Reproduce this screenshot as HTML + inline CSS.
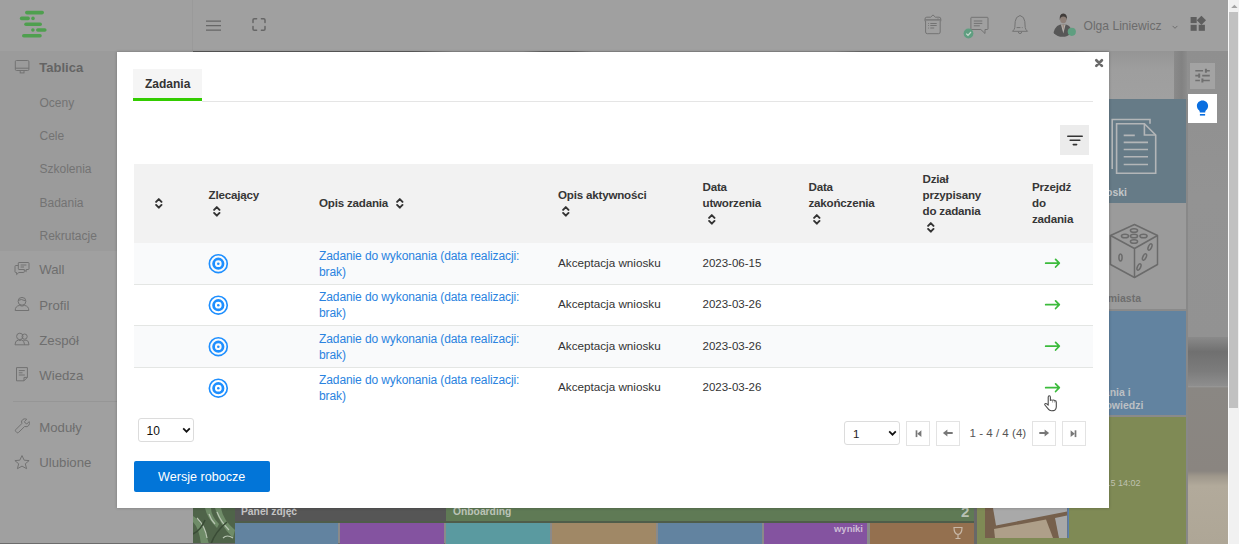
<!DOCTYPE html>
<html><head><meta charset="utf-8">
<style>
*{box-sizing:border-box;margin:0;padding:0}
html,body{width:1239px;height:544px;overflow:hidden;background:#a0a0a0;font-family:"Liberation Sans",sans-serif}
.abs{position:absolute}
#header{left:0;top:0;width:1228px;height:51px;background:#a0a0a0}
#sidebar{left:0;top:51px;width:193px;height:493px;background:#a0a0a0}
#scroll{left:1228px;top:0;width:11px;height:544px;background:#f1f1f1}
.side-item{position:absolute;left:39.5px;color:#737373;font-size:12px;line-height:16px;white-space:nowrap}
.side-main{position:absolute;left:39.3px;color:#6e6e6e;font-size:13.2px;line-height:16px;white-space:nowrap}
#modal{left:117px;top:52px;width:992px;height:456px;background:#fff;box-shadow:0 0 3px rgba(0,0,0,.25)}
.th{position:absolute;font-weight:bold;font-size:11.6px;letter-spacing:-0.2px;color:#363636;line-height:16px;white-space:nowrap}
.row{position:absolute;left:17px;width:959px;height:42px;border-bottom:1px solid #e3e3e3}
.odd{background:#f9fafb}
.cell{position:absolute;font-size:11.7px;color:#333;white-space:nowrap;line-height:16px}
.link{font-size:12px;letter-spacing:-0.1px}
.link{color:#2a83e0}
.pb{top:421px;width:24px;height:25px;border:1px solid #e3e3e3;background:#fff}
</style></head><body>

<!-- HEADER -->
<div id="header" class="abs">
  <svg class="abs" style="left:0;top:0" width="60" height="50">
    <g stroke="#4f9f4f" stroke-width="3.6" stroke-linecap="round">
      <line x1="26.8" y1="12.6" x2="42.2" y2="12.6"/>
      <line x1="21.6" y1="18.4" x2="28.1" y2="18.4"/>
      <line x1="26" y1="24.2" x2="40.2" y2="24.2"/>
      <line x1="37.8" y1="30" x2="44.8" y2="30"/>
      <line x1="23.8" y1="35.8" x2="40" y2="35.8"/>
    </g>
    <circle cx="33" cy="18.4" r="1.8" fill="#4f9f4f"/>
    <circle cx="32.9" cy="30" r="1.8" fill="#4f9f4f"/>
  </svg>
  <div class="abs" style="left:192px;top:0;width:1px;height:51px;background:#9a9a9a"></div>

  <!-- hamburger -->
  <svg class="abs" style="left:204px;top:17px" width="20" height="16"><path d="M2 4.2 H17 M2 8.7 H17 M2 13.2 H17" stroke="#666" stroke-width="1.3"/></svg>
  <!-- fullscreen -->
  <svg class="abs" style="left:250px;top:16px" width="18" height="17"><path d="M3 6.5 V4 Q3 2.7 4.3 2.7 H6.6 M11.4 2.7 H13.7 Q15 2.7 15 4 V6.5 M15 10.5 V13 Q15 14.3 13.7 14.3 H11.4 M6.6 14.3 H4.3 Q3 14.3 3 13 V10.5" fill="none" stroke="#666" stroke-width="1.5" stroke-linecap="round"/></svg>
  <!-- clipboard -->
  <svg class="abs" style="left:922px;top:13px" width="21" height="23"><g fill="none" stroke="#737373" stroke-width="1"><path d="M3.6 8 V19 Q3.6 20.7 5.3 20.7 H16.5 Q18.2 20.7 18.2 19 V8"/><path d="M3 8.2 V6 Q3 4.2 4.8 4.2 H8.6 L11 1.9 L13.4 4.2 H17 Q18.8 4.2 18.8 6 V8.2"/><path d="M3.2 6.9 H18.6" stroke-width="1.3"/><path d="M8.3 10.5 H14.7 M8.3 12.5 H14.7 M8.3 15 H12.2"/></g><g fill="#737373"><circle cx="6.6" cy="10.5" r=".55"/><circle cx="6.6" cy="12.5" r=".55"/><circle cx="6.6" cy="15" r=".55"/><circle cx="16" cy="5.7" r=".55"/></g></svg>
  <!-- chat -->
  <svg class="abs" style="left:962px;top:13px" width="30" height="28"><g fill="none" stroke="#737373" stroke-width="1"><path d="M9.6 4.3 H25.3 Q26 4.3 26 5 V15.8 Q26 16.5 25.3 16.5 H23 V20.5 L18.8 16.5 H9.6 Q8.9 16.5 8.9 15.8 V5 Q8.9 4.3 9.6 4.3 Z"/><path d="M11.8 8 H20.3 M11.8 10.4 H20.3 M11.8 12.8 H17.8"/></g><circle cx="6.5" cy="20.5" r="4.9" fill="#5f9e80"/><path d="M4.2 20.6 L6 22.3 L9 19" fill="none" stroke="#c9d9d0" stroke-width="1.2"/></svg>
  <!-- bell -->
  <svg class="abs" style="left:1010px;top:13px" width="20" height="23"><g fill="none" stroke="#737373" stroke-width="1"><path d="M10 2.5 Q5.6 3.6 5.2 8.5 L4.8 14.5 Q4.5 16.6 2.5 18.3 H17.5 Q15.5 16.6 15.2 14.5 L14.8 8.5 Q14.4 3.6 10 2.5 Z"/><path d="M8.3 18.6 Q8.3 20.6 10 20.6 Q11.7 20.6 11.7 18.6"/><path d="M6.6 14.6 H10.4 M11.8 14.6 H12.6"/></g></svg>
  <!-- avatar -->
  <svg class="abs" style="left:1050px;top:11px" width="30" height="30">
    <defs><clipPath id="avc"><circle cx="12.5" cy="13.5" r="12.3"/></clipPath></defs>
    <g clip-path="url(#avc)">
    <path d="M2.5 28 Q3.5 15.5 9.8 13.8 L13.3 13.2 L16.8 13.8 Q22.5 15.5 23 28 Z" fill="#575757"/>
    <path d="M11 13.6 L13.3 22.5 L15.6 13.6 Z" fill="#b4b0ac"/>
    <path d="M12.2 13.4 L13.3 19 L14.4 13.4 Z" fill="#9a8c82"/>
    <ellipse cx="13.3" cy="8.2" rx="3.2" ry="4.1" fill="#8d7f77"/>
    <path d="M9.7 9.2 Q9.2 2.4 13.3 2.5 Q17.4 2.4 17.1 9.4 Q16.6 5.6 13.3 5.4 Q10.2 5.6 9.7 9.2 Z" fill="#403c3a"/>
    </g>
    <circle cx="21.8" cy="20.8" r="4.1" fill="#5f9e80"/>
  </svg>
  <div class="abs" style="left:1083.5px;top:18px;font-size:12.1px;color:#6c6c6c;line-height:16px;white-space:nowrap">Olga Liniewicz</div>
  <svg class="abs" style="left:1170px;top:23px" width="10" height="8"><path d="M2.6 2.9 L5 5.3 L7.4 2.9" fill="none" stroke="#6e6e6e" stroke-width="1"/></svg>
  <!-- grid icon -->
  <svg class="abs" style="left:1188px;top:14px" width="20" height="19"><g fill="#5e5e5e"><rect x="2.6" y="3" width="6.1" height="6.1"/><rect x="2.6" y="10.8" width="6.1" height="6"/><rect x="10.7" y="10.8" width="6.2" height="6"/><path d="M13.4 1.7 L18 6.3 L13.4 10.9 L8.8 6.3 Z"/></g></svg>
</div>

<!-- SIDEBAR -->
<div id="sidebar" class="abs">
  <div class="abs" style="left:0;top:0;width:193px;height:200px;background:#9b9b9b"></div>
  <svg class="abs" style="left:12px;top:7px" width="20" height="17"><g fill="none" stroke="#727272" stroke-width="1"><rect x="3.3" y="2.5" width="13.6" height="10" rx="1.2"/><path d="M3.3 10.2 H16.9"/><rect x="8.2" y="12.5" width="3.8" height="2.4"/></g></svg>
  <div class="abs" style="left:39.3px;top:9px;font-weight:bold;font-size:13px;color:#646464;line-height:16px">Tablica</div>
  <div class="side-item" style="top:43.5px">Oceny</div>
  <div class="side-item" style="top:76.5px">Cele</div>
  <div class="side-item" style="top:110px">Szkolenia</div>
  <div class="side-item" style="top:143.5px">Badania</div>
  <div class="side-item" style="top:176.5px">Rekrutacje</div>
  <!-- wall icon -->
  <svg class="abs" style="left:12px;top:209px" width="20" height="17"><g fill="none" stroke="#727272" stroke-width="1"><path d="M7 2.5 H16.3 Q17 2.5 17 3.2 V8.8 Q17 9.5 16.3 9.5 H14.2 V11.6 L12 9.5 H7 Q6.3 9.5 6.3 8.8 V3.2 Q6.3 2.5 7 2.5 Z"/><path d="M6.3 5.5 H3.7 Q3 5.5 3 6.2 V11.8 Q3 12.5 3.7 12.5 H4.6 V14.6 L6.8 12.5 H11.6 Q12.3 12.5 12.3 11.8 V9.7"/><path d="M8.6 5 H14.4 M8.6 7 H12"/></g></svg>
  <div class="side-main" style="top:211px">Wall</div>
  <!-- profil icon -->
  <svg class="abs" style="left:12px;top:244px" width="20" height="18"><g fill="none" stroke="#727272" stroke-width="1"><circle cx="10" cy="6.3" r="3.9"/><path d="M6.2 5.4 Q9 3.4 13.3 5.8"/><path d="M3.2 15.5 Q3.2 11 7.6 10.4 Q10 11.8 12.4 10.4 Q16.8 11 16.8 15.5 Z"/></g></svg>
  <div class="side-main" style="top:246.5px">Profil</div>
  <!-- zespol icon -->
  <svg class="abs" style="left:12px;top:279px" width="20" height="18"><g fill="none" stroke="#727272" stroke-width="1"><circle cx="7.8" cy="6.4" r="3.2"/><circle cx="12.6" cy="6.6" r="2.6"/><path d="M3 14.8 Q3 10.6 6.3 10 Q8 11 9.6 10 Q12.3 10.4 12.6 14.8 Z"/><path d="M11.3 10.2 Q12.7 10.8 14 10 Q16.9 10.4 17 14.8 H12.6"/></g></svg>
  <div class="side-main" style="top:282px">Zespół</div>
  <!-- wiedza icon -->
  <svg class="abs" style="left:12px;top:314px" width="20" height="18"><g fill="none" stroke="#727272" stroke-width="1"><path d="M4.5 2.6 H15.4 V12.4 L12 15.8 H4.5 Z"/><path d="M15.4 12.4 H12 V15.8"/><path d="M6.8 5.6 H12.8 M6.8 7.8 H10.5 M6.8 10 H12.8"/></g></svg>
  <div class="side-main" style="top:317px">Wiedza</div>
  <div class="abs" style="left:12.5px;top:349.5px;width:181px;height:1px;background:#969696"></div>
  <!-- wrench -->
  <svg class="abs" style="left:12px;top:366px" width="20" height="18"><path d="M3.6 14.2 Q3 13.4 3.8 12.6 L9.8 6.6 Q8.8 3.6 11 2.3 Q12.8 1.3 14.8 2.3 L12.4 4.7 L13.3 6.1 L14.8 7 L17.1 4.6 Q18 6.6 16.8 8.4 Q15.4 10.4 12.6 9.5 L6.6 15.4 Q5.6 16.2 4.8 15.5 Z" fill="none" stroke="#727272" stroke-width="1" stroke-linejoin="round"/></svg>
  <div class="side-main" style="top:369px">Moduły</div>
  <!-- star -->
  <svg class="abs" style="left:12px;top:403px" width="20" height="17"><path d="M10 1.6 L12.2 6.2 L17.1 6.6 L13.3 9.8 L14.6 14.7 L10 12.1 L5.4 14.7 L6.7 9.8 L2.9 6.6 L7.8 6.2 Z" fill="none" stroke="#727272" stroke-width="1" stroke-linejoin="round"/></svg>
  <div class="side-main" style="top:404px">Ulubione</div>
</div>

<!-- MAIN background -->
<!-- MAIN BG -->
<div class="abs" style="left:193px;top:51px;width:1035.00px;height:493.00px;background:#8a8a8a;"></div>
<div class="abs" style="left:193px;top:51px;width:916px;height:1px;background:linear-gradient(90deg,#5a5a5a 0px,#5e5e5e 220px,#8a8a8a 260px,#8a8a8a 330px,#666 350px,#666 380px,#8c8c8c 400px,#8c8c8c 640px,#6a6a6a 670px,#707070 880px,#8c8c8c 916px)"></div>
<div class="abs" style="left:1109px;top:51px;width:65.00px;height:48.00px;background:linear-gradient(180deg,#959595 0%,#9e9e9e 40%,#a0a0a0 100%);"></div>
<div class="abs" style="left:1174px;top:51px;width:13.00px;height:48.00px;background:linear-gradient(90deg,#8a8a8a,#828282 60%,#8c8c8c);"></div>
<div class="abs" style="left:1187px;top:51px;width:41.00px;height:289.00px;background:linear-gradient(180deg,#8f8f8f 0%,#939393 50%,#929292 100%);"></div>
<div class="abs" style="left:1187px;top:337px;width:41px;height:49px;background:linear-gradient(180deg,#8a8a8a 0%,#707070 30%,#7c7c7c 70%,#8e8e8e 100%)"></div>
<div class="abs" style="left:1187px;top:386px;width:41px;height:158px;background:linear-gradient(180deg,#9a9a9a 0px,#8a8783 2px,#8a8580 85px,#9e978b 90px,#b2aa9b 100px,#aea696 158px)"></div>
<div class="abs" style="left:1186px;top:99px;width:1.5px;height:445px;background:#888;"></div>
<div class="abs" style="left:1109px;top:99px;width:76.70px;height:104.00px;background:#667b87;"></div>
<div class="abs" style="left:1109px;top:203.3px;width:76.70px;height:105.90px;background:#9b9b9b;"></div>
<div class="abs" style="left:1109px;top:310.5px;width:76.70px;height:104.80px;background:#6283a0;"></div>
<div class="abs" style="left:1109px;top:417px;width:77.00px;height:127.00px;background:#7f8a55;"></div>
<svg class="abs" style="left:1109px;top:115px" width="50" height="62"><g fill="none" stroke="#b3b6b8" stroke-width="1.6"><path d="M3.2 54 V4.5 H41 V8.7"/><path d="M7.6 58.3 V8.7 H35.4 L46.7 20 V58.3 Z"/><path d="M35.4 8.7 V20 H46.7"/><path d="M14.7 20.4 H25.8 M14.7 27.4 H39 M14.7 34.5 H39 M14.7 41.8 H39 M14.7 49.5 H39"/></g></svg>
<div class="abs" style="right:112px;top:186.4px;font-weight:bold;font-size:10.5px;color:#c3c6c8;line-height:13px;white-space:nowrap">Wnioski</div>
<svg class="abs" style="left:1105px;top:220px" width="58" height="62"><g fill="none" stroke="#6b6b6b" stroke-width="1.5" stroke-linejoin="round"><path d="M29.5 4.5 L52.5 15.5 L52.5 44.5 L29.5 57.5 L5.5 44.5 L5.5 15.5 Z"/><path d="M5.5 15.5 L29.5 28.5 L52.5 15.5 M29.5 28.5 V57.5"/><ellipse cx="29" cy="10.5" rx="3.6" ry="1.8"/><ellipse cx="20" cy="16" rx="3.6" ry="1.8"/><ellipse cx="38.5" cy="16" rx="3.6" ry="1.8"/><ellipse cx="29" cy="16" rx="3.6" ry="1.8"/><ellipse cx="29" cy="21.5" rx="3.6" ry="1.8"/><ellipse cx="15.5" cy="37.5" rx="1.6" ry="3.4"/><ellipse cx="45" cy="27" rx="1.6" ry="3.4" transform="rotate(25 45 27)"/><ellipse cx="39.5" cy="37" rx="1.6" ry="3.4" transform="rotate(25 39.5 37)"/><ellipse cx="34" cy="47" rx="1.6" ry="3.4" transform="rotate(25 34 47)"/></g></svg>
<div class="abs" style="right:98px;top:291.9px;font-weight:bold;font-size:10.5px;color:#6e6e6e;line-height:13px;white-space:nowrap">Gra miasta</div>
<div class="abs" style="right:108.3px;top:386px;font-weight:bold;font-size:10.5px;color:#bcc0c4;line-height:13px;white-space:nowrap">Pytania i</div>
<div class="abs" style="right:95.7px;top:399.1px;font-weight:bold;font-size:10.5px;color:#bcc0c4;line-height:13px;white-space:nowrap">odpowiedzi</div>
<div class="abs" style="right:98.5px;top:477px;font-size:9px;color:#bfc2b0;line-height:12px;white-space:nowrap">2023-06-15 14:02</div>
<div class="abs" style="left:1189.6px;top:62.8px;width:25.70px;height:26.20px;background:#a3a3a3;"></div>
<svg class="abs" style="left:1190px;top:63px" width="26" height="26"><g stroke="#6f6f6f" stroke-width="1.6"><path d="M5.3 7.8 H13.1 M15.9 7.8 H19.8 M5.3 12.6 H9 M12.2 12.6 H19.8 M5.3 17.5 H9.9 M12.4 17.5 H19.8"/></g><g stroke="#6f6f6f" stroke-width="2"><path d="M15.9 5.7 V9.7 M9.2 10.6 V14.7 M12.4 15.4 V19.5"/></g></svg>
<div class="abs" style="left:1188px;top:94px;width:29.00px;height:29.00px;background:#fff;"></div>
<svg class="abs" style="left:1193px;top:97px" width="20" height="22"><path d="M9.5 3.4 C12.7 3.4 15.1 5.8 15.1 8.9 C15.1 10.9 14.2 12.1 13 13.2 C12.4 13.8 12.2 14.5 12.2 15.6 H6.8 C6.8 14.5 6.6 13.8 6 13.2 C4.8 12.1 3.9 10.9 3.9 8.9 C3.9 5.8 6.3 3.4 9.5 3.4 Z" fill="#0a6fe0"/><rect x="6.9" y="17" width="5.2" height="1.6" fill="#0a6fe0"/></svg>
<svg class="abs" style="left:193px;top:508px;filter:blur(0.6px)" width="42" height="36"><rect width="42" height="36" fill="#4f6449"/><g fill="#6f8c68"><path d="M0 8 Q10 14 16 36 H8 Q6 20 0 14 Z"/><path d="M22 0 Q26 16 40 30 L42 22 Q30 12 28 0 Z"/><path d="M12 0 Q14 10 24 20 L26 16 Q18 8 18 0 Z"/></g><g stroke="#b9c6b3" stroke-width="1.2" fill="none"><path d="M4 10 Q12 18 14 30"/><path d="M24 4 Q28 14 36 22"/><path d="M30 30 Q34 26 40 30"/><path d="M16 6 Q18 12 22 16"/></g><g stroke="#3a4c36" stroke-width="1.6" fill="none"><path d="M18 36 Q22 24 34 14"/><path d="M0 26 Q8 22 12 12"/></g></svg>
<div class="abs" style="left:0;top:543px;width:445px;height:1px;background:#6c6c6c"></div>
<div class="abs" style="left:234.5px;top:520.5px;width:874.50px;height:2.50px;background:#4f5d4a;"></div>
<div class="abs" style="left:234.5px;top:508px;width:211.30px;height:12.50px;background:#565656;"></div>
<div class="abs" style="left:445.8px;top:508px;width:529.50px;height:13.30px;background:#5f7a55;"></div>
<div class="abs" style="left:241px;top:505.4px;font-weight:bold;font-size:10.3px;color:#c4c4c4;line-height:14px;white-space:nowrap">Panel zdjęć</div>
<div class="abs" style="left:453px;top:505.4px;font-weight:bold;font-size:10.3px;color:#bcc4b8;line-height:14px;white-space:nowrap">Onboarding</div>
<div class="abs" style="left:961px;top:503px;font-weight:bold;font-size:15px;color:#b8c2b4;line-height:18px">2</div>
<div class="abs" style="left:234.6px;top:523px;width:103.40px;height:21.00px;background:#6283a0;"></div>
<div class="abs" style="left:340px;top:523px;width:103.90px;height:21.00px;background:#8453a0;"></div>
<div class="abs" style="left:445.8px;top:523px;width:104.00px;height:21.00px;background:#5a9aa0;"></div>
<div class="abs" style="left:552px;top:523px;width:103.70px;height:21.00px;background:#a08866;"></div>
<div class="abs" style="left:657.9px;top:523px;width:104.10px;height:21.00px;background:#6283a0;"></div>
<div class="abs" style="left:763.7px;top:523px;width:103.30px;height:21.00px;background:#8453a0;"></div>
<div class="abs" style="left:870px;top:523px;width:103.80px;height:21.00px;background:#94704f;"></div>
<div class="abs" style="right:376px;top:523px;font-weight:bold;font-size:9.5px;color:#cdbcd6;line-height:12px;white-space:nowrap">wyniki</div>
<svg class="abs" style="left:951px;top:525px" width="14" height="19"><g fill="none" stroke="#c8b8a8" stroke-width="1.2"><path d="M3 2.5 H11 Q11 9 7 9.5 Q3 9 3 2.5 Z"/><path d="M7 9.5 V13 M4.5 13.5 H9.5"/></g></svg>
<div class="abs" style="left:974px;top:508px;width:3px;height:36px;background:#686868"></div>
<div class="abs" style="left:977px;top:508px;width:132px;height:36px;background:#7f8a55"></div>
<svg class="abs" style="left:985px;top:508px" width="84" height="30"><rect width="84" height="30" fill="#76604c"/><path d="M8 0 H82 V3.5 L11 17.5 Z" fill="#a9a9a9"/><path d="M9 21 L61 11.5 L68 30 H10 Z" fill="#ae9f89"/><path d="M70 10 L82 7.5 V30 H74 Z" fill="#a8a8a8"/><rect x="82.3" width="1.7" height="30" fill="#5a80b0"/></svg>

<!-- SCROLLBAR -->
<div id="scroll" class="abs"></div>
<div class="abs" style="left:1227.5px;top:0;width:1px;height:544px;background:#fafafa"></div>
<div class="abs" style="left:1229px;top:12px;width:9px;height:395.5px;background:#c1c1c1"></div>
<svg class="abs" style="left:1228px;top:0" width="11" height="12"><path d="M3.2 8.1 L6.4 4.7 L9.6 8.1 Z" fill="#a3a3a3"/></svg>

<!-- MODAL -->
<div id="modal" class="abs"></div>
<svg class="abs" style="left:1094px;top:58px" width="10" height="10" viewBox="0 0 10 10"><path d="M2.3 2.3 L7.9 7.9 M7.9 2.3 L2.3 7.9" stroke="#6a6a6a" stroke-width="2.7" stroke-linecap="round"/></svg>
<!-- tab -->
<div class="abs" style="left:133px;top:69px;width:69px;height:32px;background:#f5f5f5;border-bottom:3px solid #33cc00"></div>
<div class="abs" style="left:202px;top:101px;width:891px;height:1px;background:#e5e5e5"></div>
<div class="abs" style="left:145px;top:76px;font-weight:bold;font-size:12px;color:#333;line-height:16px">Zadania</div>
<!-- filter button -->
<div class="abs" style="left:1060px;top:125px;width:29px;height:30px;background:#ececec"></div>
<svg class="abs" style="left:1060px;top:125px" width="29" height="30"><path d="M7.8 11.3 H22.2 M10.2 15.3 H19.8 M13.3 19.6 H16.6" stroke="#333" stroke-width="1.6" stroke-linecap="round"/></svg>
<!-- TABLE HEADER -->
<div class="abs" style="left:134px;top:164px;width:959px;height:79px;background:#f2f2f2"></div>
<svg class="abs" style="left:155px;top:198px" width="9" height="11" viewBox="0 0 9 11"><path d="M1.1 3.9 L3.8 1.1 L6.5 3.9 M1.1 6.9 L3.8 9.7 L6.5 6.9" fill="none" stroke="#333" stroke-width="1.9" stroke-linecap="round" stroke-linejoin="round"/></svg>
<div class="th" style="left:208.5px;top:187px">Zlecający</div>
<svg class="abs" style="left:213px;top:205.5px" width="9" height="11" viewBox="0 0 9 11"><path d="M1.1 3.9 L3.8 1.1 L6.5 3.9 M1.1 6.9 L3.8 9.7 L6.5 6.9" fill="none" stroke="#333" stroke-width="1.9" stroke-linecap="round" stroke-linejoin="round"/></svg>
<div class="th" style="left:319px;top:195px">Opis zadania</div>
<svg class="abs" style="left:396.3px;top:197.5px" width="9" height="11" viewBox="0 0 9 11"><path d="M1.1 3.9 L3.8 1.1 L6.5 3.9 M1.1 6.9 L3.8 9.7 L6.5 6.9" fill="none" stroke="#333" stroke-width="1.9" stroke-linecap="round" stroke-linejoin="round"/></svg>
<div class="th" style="left:558px;top:187px">Opis aktywności</div>
<svg class="abs" style="left:562px;top:205.5px" width="9" height="11" viewBox="0 0 9 11"><path d="M1.1 3.9 L3.8 1.1 L6.5 3.9 M1.1 6.9 L3.8 9.7 L6.5 6.9" fill="none" stroke="#333" stroke-width="1.9" stroke-linecap="round" stroke-linejoin="round"/></svg>
<div class="th" style="left:702.5px;top:179px">Data</div>
<div class="th" style="left:702.5px;top:195px">utworzenia</div>
<svg class="abs" style="left:707.5px;top:213.5px" width="9" height="11" viewBox="0 0 9 11"><path d="M1.1 3.9 L3.8 1.1 L6.5 3.9 M1.1 6.9 L3.8 9.7 L6.5 6.9" fill="none" stroke="#333" stroke-width="1.9" stroke-linecap="round" stroke-linejoin="round"/></svg>
<div class="th" style="left:808.5px;top:179px">Data</div>
<div class="th" style="left:808.5px;top:195px">zakończenia</div>
<svg class="abs" style="left:813.4px;top:213.5px" width="9" height="11" viewBox="0 0 9 11"><path d="M1.1 3.9 L3.8 1.1 L6.5 3.9 M1.1 6.9 L3.8 9.7 L6.5 6.9" fill="none" stroke="#333" stroke-width="1.9" stroke-linecap="round" stroke-linejoin="round"/></svg>
<div class="th" style="left:922.5px;top:170.5px">Dział</div>
<div class="th" style="left:922.5px;top:186.5px">przypisany</div>
<div class="th" style="left:922.5px;top:202.5px">do zadania</div>
<svg class="abs" style="left:926.5px;top:221.5px" width="9" height="11" viewBox="0 0 9 11"><path d="M1.1 3.9 L3.8 1.1 L6.5 3.9 M1.1 6.9 L3.8 9.7 L6.5 6.9" fill="none" stroke="#333" stroke-width="1.9" stroke-linecap="round" stroke-linejoin="round"/></svg>
<div class="th" style="left:1032px;top:179px">Przejdź</div>
<div class="th" style="left:1032px;top:195px">do</div>
<div class="th" style="left:1032px;top:211px">zadania</div>
<!-- ROWS -->
<div class="abs" style="left:134px;top:243.2px;width:959px;height:41.5px;border-bottom:1px solid #e4e6e4;background:#f9fafb"></div>
<svg class="abs" style="left:208px;top:253px" width="21" height="21" viewBox="0 0 21 21"><g fill="none" stroke="#1e8fff"><circle cx="10.3" cy="10.70" r="8.95" stroke-width="1.65"/><circle cx="10.3" cy="10.70" r="4.72" stroke-width="2.75"/></g><circle cx="10.3" cy="10.70" r="1.3" fill="#1e8fff"/></svg>
<div class="cell link" style="left:319px;top:247.7px">Zadanie do wykonania (data realizacji:<br>brak)</div>
<div class="cell" style="left:558px;top:254.7px">Akceptacja wniosku</div>
<div class="cell" style="left:702.5px;top:254.7px;font-size:11.5px">2023-06-15</div>
<svg class="abs" style="left:1043px;top:257px" width="19" height="12" viewBox="0 0 19 12"><path d="M2.7 6.20 H15.6 M12.6 2.40 L16.3 6.20 L12.6 10.00" fill="none" stroke="#3cbb3c" stroke-width="1.75" stroke-linecap="round" stroke-linejoin="round"/></svg>
<div class="abs" style="left:134px;top:284.7px;width:959px;height:41.5px;border-bottom:1px solid #e4e6e4;"></div>
<svg class="abs" style="left:208px;top:295px" width="21" height="21" viewBox="0 0 21 21"><g fill="none" stroke="#1e8fff"><circle cx="10.3" cy="10.20" r="8.95" stroke-width="1.65"/><circle cx="10.3" cy="10.20" r="4.72" stroke-width="2.75"/></g><circle cx="10.3" cy="10.20" r="1.3" fill="#1e8fff"/></svg>
<div class="cell link" style="left:319px;top:289.2px">Zadanie do wykonania (data realizacji:<br>brak)</div>
<div class="cell" style="left:558px;top:296.2px">Akceptacja wniosku</div>
<div class="cell" style="left:702.5px;top:296.2px;font-size:11.5px">2023-03-26</div>
<svg class="abs" style="left:1043px;top:299px" width="19" height="12" viewBox="0 0 19 12"><path d="M2.7 5.70 H15.6 M12.6 1.90 L16.3 5.70 L12.6 9.50" fill="none" stroke="#3cbb3c" stroke-width="1.75" stroke-linecap="round" stroke-linejoin="round"/></svg>
<div class="abs" style="left:134px;top:326.2px;width:959px;height:41.5px;border-bottom:1px solid #e4e6e4;background:#f9fafb"></div>
<svg class="abs" style="left:208px;top:336px" width="21" height="21" viewBox="0 0 21 21"><g fill="none" stroke="#1e8fff"><circle cx="10.3" cy="10.70" r="8.95" stroke-width="1.65"/><circle cx="10.3" cy="10.70" r="4.72" stroke-width="2.75"/></g><circle cx="10.3" cy="10.70" r="1.3" fill="#1e8fff"/></svg>
<div class="cell link" style="left:319px;top:330.7px">Zadanie do wykonania (data realizacji:<br>brak)</div>
<div class="cell" style="left:558px;top:337.7px">Akceptacja wniosku</div>
<div class="cell" style="left:702.5px;top:337.7px;font-size:11.5px">2023-03-26</div>
<svg class="abs" style="left:1043px;top:340px" width="19" height="12" viewBox="0 0 19 12"><path d="M2.7 6.20 H15.6 M12.6 2.40 L16.3 6.20 L12.6 10.00" fill="none" stroke="#3cbb3c" stroke-width="1.75" stroke-linecap="round" stroke-linejoin="round"/></svg>
<div class="abs" style="left:134px;top:367.7px;width:959px;height:41.5px;"></div>
<svg class="abs" style="left:208px;top:378px" width="21" height="21" viewBox="0 0 21 21"><g fill="none" stroke="#1e8fff"><circle cx="10.3" cy="10.20" r="8.95" stroke-width="1.65"/><circle cx="10.3" cy="10.20" r="4.72" stroke-width="2.75"/></g><circle cx="10.3" cy="10.20" r="1.3" fill="#1e8fff"/></svg>
<div class="cell link" style="left:319px;top:372.2px">Zadanie do wykonania (data realizacji:<br>brak)</div>
<div class="cell" style="left:558px;top:379.2px">Akceptacja wniosku</div>
<div class="cell" style="left:702.5px;top:379.2px;font-size:11.5px">2023-03-26</div>
<svg class="abs" style="left:1043px;top:382px" width="19" height="12" viewBox="0 0 19 12"><path d="M2.7 5.70 H15.6 M12.6 1.90 L16.3 5.70 L12.6 9.50" fill="none" stroke="#3cbb3c" stroke-width="1.75" stroke-linecap="round" stroke-linejoin="round"/></svg>
<!-- FOOTER -->
<div class="abs" style="left:138px;top:417.5px;width:56px;height:24.5px;border:1px solid #dcdcdc;border-radius:3px;background:#fff"></div>
<div class="abs" style="left:146.5px;top:425.5px;font-size:12px;color:#111;line-height:10px">10</div>
<svg class="abs" style="left:182px;top:427px" width="9" height="7"><path d="M1.2 1.3 L4.5 4.7 L7.8 1.3" fill="none" stroke="#111" stroke-width="1.7"/></svg>
<div class="abs" style="left:134px;top:461px;width:135.5px;height:30.5px;background:#0275d8;border-radius:2px"></div>
<div class="abs" style="left:134px;top:468.5px;width:135.5px;text-align:center;font-size:12.6px;color:#fff;line-height:16px">Wersje robocze</div>
<!-- pagination -->
<div class="abs" style="left:843.5px;top:421px;width:56.5px;height:23.5px;border:1px solid #dcdcdc;border-radius:3px;background:#fff"></div>
<div class="abs" style="left:853px;top:429px;font-size:11.5px;color:#222;line-height:10px">1</div>
<svg class="abs" style="left:888px;top:430px" width="9" height="7"><path d="M1.2 1.3 L4.5 4.7 L7.8 1.3" fill="none" stroke="#111" stroke-width="1.7"/></svg>
<div class="abs pb" style="left:906px"></div>
<div class="abs pb" style="left:936px"></div>
<div class="abs pb" style="left:1032px"></div>
<div class="abs pb" style="left:1062px"></div>
<svg class="abs" style="left:912px;top:427px" width="12" height="12"><path d="M4.5 3.3 V10.1" stroke="#777" stroke-width="1.7"/><path d="M9.4 3.3 V10.1 L5.2 6.7 Z" fill="#777"/></svg>
<svg class="abs" style="left:942px;top:427px" width="12" height="12"><path d="M5.4 2.6 L0.9 6 L5.4 9.4 Z" fill="#777"/><path d="M4 6 H10.7" stroke="#777" stroke-width="2"/></svg>
<div class="abs" style="left:969.5px;top:425px;font-size:11.6px;color:#555;line-height:16px">1 - 4 / 4 (4)</div>
<svg class="abs" style="left:1038px;top:427px" width="12" height="12"><path d="M6.6 2.6 L11.1 6 L6.6 9.4 Z" fill="#777"/><path d="M1.3 6 H8" stroke="#777" stroke-width="2"/></svg>
<svg class="abs" style="left:1068px;top:427px" width="12" height="12"><path d="M7.5 3.3 V10.1" stroke="#777" stroke-width="1.7"/><path d="M2.6 3.3 V10.1 L6.8 6.7 Z" fill="#777"/></svg>

<!-- cursor -->
<svg class="abs" style="left:1042px;top:394px" width="17" height="19"><path d="M6.2 7.6 V3.2 Q6.2 1.7 7.3 1.7 Q8.4 1.7 8.4 3.2 V6.4 Q9.4 5.7 10.6 6.2 Q12 5.8 12.8 6.6 Q14.3 6.6 14.3 8.2 V13 Q14.3 15 12.7 16.2 Q11.2 16.8 9.4 16.7 Q7.4 16.6 6.6 15.4 L2.9 11 Q2.4 10.2 3.1 9.7 Q3.9 9.2 4.8 9.9 L6.2 11.2 Z" fill="#fff" stroke="#4a4a4a" stroke-width="1.1" stroke-linejoin="round"/><path d="M10.6 6.2 V8.6 M12.8 6.6 V8.6" stroke="#888" stroke-width=".8"/></svg>
</body></html>
